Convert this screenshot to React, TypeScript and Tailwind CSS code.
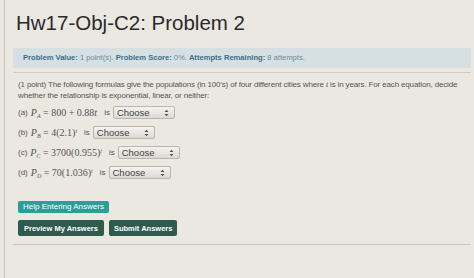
import React from 'react';

const rows = [
  { label: '(a)', sub: 'A', rhs: <>= 800 + 0.88<i>t</i></> },
  { label: '(b)', sub: 'B', rhs: <>= 4(2.1)<sup className="text-[6px]"><i>t</i></sup></> },
  { label: '(c)', sub: 'C', rhs: <>= 3700(0.955)<sup className="text-[6px]"><i>t</i></sup></> },
  { label: '(d)', sub: 'D', rhs: <>= 70(1.036)<sup className="text-[6px]"><i>t</i></sup></> },
];

const ChooseSelect = () => (
  <div className="flex items-center justify-between w-[62px] h-[13px] px-[3px] rounded-[2px] border border-[#b9b6b0] bg-gradient-to-b from-[#f4f3f0] to-[#dcdad5] text-[9.5px] text-[#444] font-['Liberation_Sans',sans-serif]">
    <span>Choose</span>
    <svg width="5" height="8" viewBox="0 0 5 8" className="mr-[2px]">
      <path d="M0.5 3 L2.5 0.8 L4.5 3 Z" fill="#555" />
      <path d="M0.5 5 L2.5 7.2 L4.5 5 Z" fill="#555" />
    </svg>
  </div>
);

export default function App() {
  return (
    <div className="w-[474px] h-[278px] overflow-hidden bg-[#ebe8e2] font-['Liberation_Sans',sans-serif]">
      <div className="ml-[4px] h-full border-l border-[#c8c5bf] pl-[8px] pr-[3px]">
        <h1 className="pt-[12px] pl-[3px] text-[20.5px] leading-[22px] text-[#2a2a2a]">Hw17-Obj-C2: Problem 2</h1>

        <div className="mt-[14px] h-[20px] flex items-center px-[10px] rounded-[2px] bg-[#d6e0e3] text-[7.6px] text-[#6a8a9a]">
          <span className="font-bold text-[#3d6f87]">Problem Value:</span>
          <span className="ml-[2px]">1 point(s).</span>
          <span className="ml-[2px] font-bold text-[#3d6f87]">Problem Score:</span>
          <span className="ml-[2px]">0%.</span>
          <span className="ml-[2px] font-bold text-[#3d6f87]">Attempts Remaining:</span>
          <span className="ml-[2px]">8 attempts.</span>
        </div>

        <div className="mt-[4px] border-t border-[#cfccc6] pl-[5px] pt-[6px] text-[8px] leading-[11px] text-[#555]">
          <p className="tracking-[-0.15px]">
            (1 point) The following formulas give the populations (in 100's) of four different cities where <i className="font-['Liberation_Serif',serif]">t</i> is in years. For each equation, decide whether the relationship is exponential, linear, or neither:
          </p>
          <div className="mt-[5px] flex flex-col gap-[7px]">
            {rows.map((r) => (
              <div key={r.label} className="flex items-center h-[13px]">
                <span>{r.label}</span>
                <span className="ml-[3px] font-['Liberation_Serif',serif] text-[10px] text-[#555]">
                  <i>P</i><sub className="text-[6px]"><i>{r.sub}</i></sub> {r.rhs}
                </span>
                <span className="ml-[7px] mr-[3px]">is</span>
                <ChooseSelect />
              </div>
            ))}
          </div>

          <div className="mt-[22px] flex flex-col gap-[7px]">
            <div>
              <button className="h-[12px] px-[5px] rounded-[2px] bg-[#2c9d97] text-white text-[8px] leading-[12px]">Help Entering Answers</button>
            </div>
            <div className="flex gap-[5px]">
              <button className="h-[16px] px-[6px] rounded-[2px] bg-[#2f5a4f] text-white text-[7.5px] font-bold">Preview My Answers</button>
              <button className="h-[16px] px-[5px] rounded-[2px] bg-[#2f5a4f] text-white text-[7.5px] font-bold">Submit Answers</button>
            </div>
          </div>
        </div>

        <div className="mt-[8px] border-t border-[#c9c6c0]" />
      </div>
    </div>
  );
}
